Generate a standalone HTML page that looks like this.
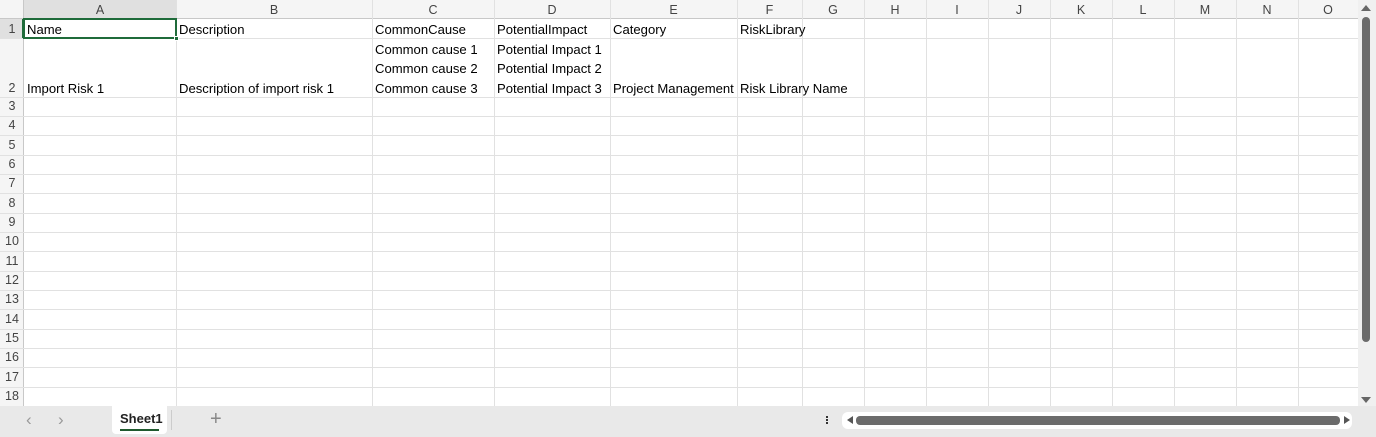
<!DOCTYPE html>
<html><head><style>
*{margin:0;padding:0;box-sizing:border-box}
body{width:1376px;height:437px;overflow:hidden;background:#fff;font-family:"Liberation Sans",sans-serif;position:relative}
.a{position:absolute}
.vl{position:absolute;top:0;width:1px;height:406px;background:#e1e1e1}
.hl{position:absolute;left:0;width:1358px;height:1px;background:#e1e1e1}
.ch{position:absolute;top:0;height:19px;font-size:12.5px;color:#444;text-align:center;line-height:20px}
.rh{position:absolute;left:0;width:24px;font-size:12.5px;color:#444;text-align:center}
.t{position:absolute;font-size:13.1px;color:#000;white-space:nowrap;line-height:19px}
</style></head><body>
<div class="a" style="left:0;top:0;width:1358px;height:19px;background:#f5f5f5"></div>
<div class="a" style="left:0;top:0;width:24px;height:406px;background:#f5f5f5"></div>
<div class="a" style="left:24px;top:0;width:152px;height:19px;background:#e0e0e0"></div>
<div class="a" style="left:0;top:19px;width:24px;height:19px;background:#e0e0e0"></div>
<div class="a" style="left:0;top:18px;width:1358px;height:1px;background:#c8c8c8"></div>
<div class="a" style="left:24px;top:18px;width:152px;height:2px;background:#1f6b3a"></div>
<div class="a" style="left:23px;top:0;width:1px;height:406px;background:#c8c8c8"></div>
<div class="a" style="left:22px;top:19px;width:2px;height:19px;background:#1f6b3a"></div>

<div class="vl" style="left:176px"></div><div class="vl" style="left:372px"></div><div class="vl" style="left:494px"></div><div class="vl" style="left:610px"></div><div class="vl" style="left:737px"></div><div class="vl" style="left:802px"></div><div class="vl" style="left:864px"></div><div class="vl" style="left:926px"></div><div class="vl" style="left:988px"></div><div class="vl" style="left:1050px"></div><div class="vl" style="left:1112px"></div><div class="vl" style="left:1174px"></div><div class="vl" style="left:1236px"></div><div class="vl" style="left:1298px"></div>

<div class="hl" style="top:38px"></div><div class="hl" style="top:97px"></div>
<div class="hl" style="top:116px"></div><div class="hl" style="top:135px"></div><div class="hl" style="top:155px"></div><div class="hl" style="top:174px"></div><div class="hl" style="top:193px"></div><div class="hl" style="top:213px"></div><div class="hl" style="top:232px"></div><div class="hl" style="top:251px"></div><div class="hl" style="top:271px"></div><div class="hl" style="top:290px"></div><div class="hl" style="top:309px"></div><div class="hl" style="top:329px"></div><div class="hl" style="top:348px"></div><div class="hl" style="top:367px"></div><div class="hl" style="top:387px"></div>

<div class="ch" style="left:24px;width:152px">A</div><div class="ch" style="left:176px;width:196px">B</div><div class="ch" style="left:372px;width:122px">C</div><div class="ch" style="left:494px;width:116px">D</div><div class="ch" style="left:610px;width:127px">E</div><div class="ch" style="left:737px;width:65px">F</div><div class="ch" style="left:802px;width:62px">G</div><div class="ch" style="left:864px;width:62px">H</div><div class="ch" style="left:926px;width:62px">I</div><div class="ch" style="left:988px;width:62px">J</div><div class="ch" style="left:1050px;width:62px">K</div><div class="ch" style="left:1112px;width:62px">L</div><div class="ch" style="left:1174px;width:62px">M</div><div class="ch" style="left:1236px;width:62px">N</div><div class="ch" style="left:1298px;width:60px">O</div>

<div class="rh" style="top:20px;line-height:19px">1</div>
<div class="rh" style="top:79px;line-height:19px">2</div>
<div class="rh" style="top:97px;line-height:19px">3</div><div class="rh" style="top:116px;line-height:19px">4</div><div class="rh" style="top:136px;line-height:19px">5</div><div class="rh" style="top:155px;line-height:19px">6</div><div class="rh" style="top:174px;line-height:19px">7</div><div class="rh" style="top:194px;line-height:19px">8</div><div class="rh" style="top:213px;line-height:19px">9</div><div class="rh" style="top:232px;line-height:19px">10</div><div class="rh" style="top:252px;line-height:19px">11</div><div class="rh" style="top:271px;line-height:19px">12</div><div class="rh" style="top:290px;line-height:19px">13</div><div class="rh" style="top:310px;line-height:19px">14</div><div class="rh" style="top:329px;line-height:19px">15</div><div class="rh" style="top:348px;line-height:19px">16</div><div class="rh" style="top:368px;line-height:19px">17</div><div class="rh" style="top:387px;line-height:19px">18</div>

<div class="a" style="left:23px;top:18px;width:154px;height:21px;border:2px solid #1f6b3a"></div>
<div class="a" style="left:174px;top:36px;width:5px;height:5px;background:#1f6b3a;border:1px solid #fff"></div>

<div class="t" style="left:27px;top:20px">Name</div>
<div class="t" style="left:179px;top:20px">Description</div>
<div class="t" style="left:375px;top:20px">CommonCause</div>
<div class="t" style="left:497px;top:20px">PotentialImpact</div>
<div class="t" style="left:613px;top:20px">Category</div>
<div class="t" style="left:740px;top:20px">RiskLibrary</div>
<div class="t" style="left:375px;top:40px">Common cause 1</div>
<div class="t" style="left:497px;top:40px">Potential Impact 1</div>
<div class="t" style="left:375px;top:59px">Common cause 2</div>
<div class="t" style="left:497px;top:59px">Potential Impact 2</div>
<div class="t" style="left:27px;top:79px">Import Risk 1</div>
<div class="t" style="left:179px;top:79px">Description of import risk 1</div>
<div class="t" style="left:375px;top:79px">Common cause 3</div>
<div class="t" style="left:497px;top:79px">Potential Impact 3</div>
<div class="t" style="left:613px;top:79px">Project Management</div>
<div class="t" style="left:740px;top:79px">Risk Library Name</div>

<div class="a" style="left:1358px;top:0;width:18px;height:406px;background:#f0f0f0"></div>
<div class="a" style="left:1361px;top:5px;width:0;height:0;border-left:5px solid transparent;border-right:5px solid transparent;border-bottom:6px solid #666"></div>
<div class="a" style="left:1362px;top:17px;width:8px;height:325px;background:#6b6b6b;border-radius:4px"></div>
<div class="a" style="left:1361px;top:397px;width:0;height:0;border-left:5px solid transparent;border-right:5px solid transparent;border-top:6px solid #666"></div>

<div class="a" style="left:0;top:406px;width:1376px;height:31px;background:#e9e9e9"></div>
<div class="a" style="left:26px;top:410px;font-size:17px;color:#999">&#8249;</div>
<div class="a" style="left:58px;top:410px;font-size:17px;color:#999">&#8250;</div>
<div class="a" style="left:112px;top:406px;width:55px;height:28px;background:#fff;border-radius:0 0 4px 4px"></div>
<div class="a" style="left:120px;top:411px;font-size:13px;font-weight:bold;color:#222">Sheet1</div>
<div class="a" style="left:120px;top:429px;width:39px;height:2px;background:#1f5a2e"></div>
<div class="a" style="left:171px;top:410px;width:1px;height:20px;background:#ccc"></div>
<div class="a" style="left:210px;top:408px;font-size:20px;color:#888">+</div>
<div class="a" style="left:826px;top:416px;width:2px;height:2px;background:#333;box-shadow:0 3px 0 #333,0 6px 0 #333"></div>
<div class="a" style="left:842px;top:412px;width:510px;height:17px;background:#fff;border-radius:6px"></div>
<div class="a" style="left:847px;top:416px;width:0;height:0;border-top:4px solid transparent;border-bottom:4px solid transparent;border-right:6px solid #555"></div>
<div class="a" style="left:856px;top:416px;width:484px;height:9px;background:#6b6b6b;border-radius:4px"></div>
<div class="a" style="left:1344px;top:416px;width:0;height:0;border-top:4px solid transparent;border-bottom:4px solid transparent;border-left:6px solid #555"></div>
</body></html>
